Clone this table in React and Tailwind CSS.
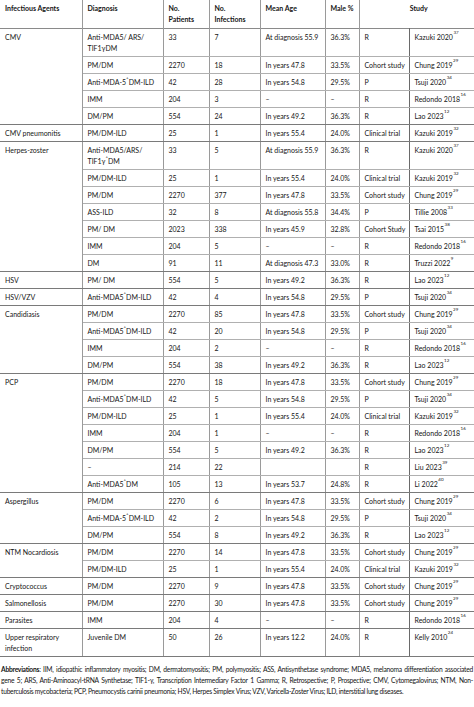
const rows = [
  { agent: 'CMV', items: [
    [['Anti-MDA5/ ARS/', 'TIF1γDM'], '33', '7', 'At diagnosis 55.9', '36.3%', 'R', 'Kazuki 2020', '37'],
    ['PM/DM', '2270', '18', 'In years 47.8', '33.5%', 'Cohort study', 'Chung 2019', '29'],
    ['Anti-MDA-5+DM-ILD', '42', '28', 'In years 54.8', '29.5%', 'P', 'Tsuji 2020', '34'],
    ['IMM', '204', '3', '–', '–', 'R', 'Redondo 2018', '16'],
    ['DM/PM', '554', '24', 'In years 49.2', '36.3%', 'R', 'Lao 2023', '12'],
  ] },
  { agent: 'CMV pneumonitis', items: [
    ['PM/DM-ILD', '25', '1', 'In years 55.4', '24.0%', 'Clinical trial', 'Kazuki 2019', '32'],
  ] },
  { agent: 'Herpes-zoster', items: [
    [['Anti-MDA5/ARS/', 'TIF1γ+DM'], '33', '5', 'At diagnosis 55.9', '36.3%', 'R', 'Kazuki 2020', '37'],
    ['PM/DM-ILD', '25', '1', 'In years 55.4', '24.0%', 'Clinical trial', 'Kazuki 2019', '32'],
    ['PM/DM', '2270', '377', 'In years 47.8', '33.5%', 'Cohort study', 'Chung 2019', '29'],
    ['ASS-ILD', '32', '8', 'At diagnosis 55.8', '34.4%', 'P', 'Tillie 2008', '33'],
    ['PM/ DM', '2023', '338', 'In years 45.9', '32.8%', 'Cohort Study', 'Tsai 2015', '38'],
    ['IMM', '204', '5', '–', '–', 'R', 'Redondo 2018', '16'],
    ['DM', '91', '11', 'At diagnosis 47.3', '33.0%', 'R', 'Truzzi 2022', '9'],
  ] },
  { agent: 'HSV', items: [
    ['PM/ DM', '554', '5', 'In years 49.2', '36.3%', 'R', 'Lao 2023', '12'],
  ] },
  { agent: 'HSV/VZV', items: [
    ['Anti-MDA5+DM-ILD', '42', '4', 'In years 54.8', '29.5%', 'P', 'Tsuji 2020', '34'],
  ] },
  { agent: 'Candidiasis', items: [
    ['PM/DM', '2270', '85', 'In years 47.8', '33.5%', 'Cohort study', 'Chung 2019', '29'],
    ['Anti-MDA5+DM-ILD', '42', '20', 'In years 54.8', '29.5%', 'P', 'Tsuji 2020', '34'],
    ['IMM', '204', '2', '–', '–', 'R', 'Redondo 2018', '16'],
    ['DM/PM', '554', '38', 'In years 49.2', '36.3%', 'R', 'Lao 2023', '12'],
  ] },
  { agent: 'PCP', items: [
    ['PM/DM', '2270', '18', 'In years 47.8', '33.5%', 'Cohort study', 'Chung 2019', '29'],
    ['Anti-MDA5+DM-ILD', '42', '5', 'In years 54.8', '29.5%', 'P', 'Tsuji 2020', '34'],
    ['PM/DM-ILD', '25', '1', 'In years 55.4', '24.0%', 'Clinical trial', 'Kazuki 2019', '32'],
    ['IMM', '204', '1', '–', '–', 'R', 'Redondo 2018', '16'],
    ['DM/PM', '554', '5', 'In years 49.2', '36.3%', 'R', 'Lao 2023', '12'],
    ['–', '214', '22', '', '', 'R', 'Liu 2023', '39'],
    ['Anti-MDA5+DM', '105', '13', 'In years 53.7', '24.8%', 'R', 'Li 2022', '40'],
  ] },
  { agent: 'Aspergillus', items: [
    ['PM/DM', '2270', '6', 'In years 47.8', '33.5%', 'Cohort study', 'Chung 2019', '29'],
    ['Anti-MDA-5+DM-ILD', '42', '2', 'In years 54.8', '29.5%', 'P', 'Tsuji 2020', '34'],
    ['DM/PM', '554', '8', 'In years 49.2', '36.3%', 'R', 'Lao 2023', '12'],
  ] },
  { agent: 'NTM Nocardiosis', items: [
    ['PM/DM', '2270', '14', 'In years 47.8', '33.5%', 'Cohort study', 'Chung 2019', '29'],
    ['PM/DM-ILD', '25', '1', 'In years 55.4', '24.0%', 'Clinical trial', 'Kazuki 2019', '32'],
  ] },
  { agent: 'Cryptococcus', items: [
    ['PM/DM', '2270', '9', 'In years 47.8', '33.5%', 'Cohort study', 'Chung 2019', '29'],
  ] },
  { agent: 'Salmonellosis', items: [
    ['PM/DM', '2270', '30', 'In years 47.8', '33.5%', 'Cohort study', 'Chung 2019', '29'],
  ] },
  { agent: 'Parasites', items: [
    ['IMM', '204', '4', '–', '–', 'R', 'Redondo 2018', '16'],
  ] },
  { agent: ['Upper respiratory', 'infection'], items: [
    ['Juvenile DM', '50', '26', 'In years 12.2', '24.0%', 'R', 'Kelly 2010', '24'],
  ] },
];

// "+" inside a diagnosis is printed as a superscript
function Diagnosis({ text }) {
  const parts = text.split('+');
  if (parts.length === 1) return text;
  return (
    <>
      {parts[0]}
      <sup className="text-[4.5px] align-[3px]">+</sup>
      {parts[1]}
    </>
  );
}

function Lines({ value, render = (v) => v }) {
  if (Array.isArray(value)) {
    return value.map((line, i) => (
      <span key={i} className="block">
        {render(line)}
      </span>
    ));
  }
  return render(value);
}

const cell = 'pl-[5px] pr-[1px] pt-[3px] pb-[2px] align-top text-left font-normal whitespace-nowrap overflow-hidden';

export default function App() {
  return (
    <div className="w-[474px] bg-white text-[#161616] font-['Lato','Liberation_Sans',sans-serif] text-[7px] leading-[11px]">
      <table className="w-[474px] table-fixed border-collapse">
        <colgroup>
          <col className="w-[82px]" />
          <col className="w-[81px]" />
          <col className="w-[46px]" />
          <col className="w-[51px]" />
          <col className="w-[65px]" />
          <col className="w-[34px]" />
          <col className="w-[50px]" />
          <col className="w-[65px]" />
        </colgroup>
        <thead>
          <tr className="h-[28px] border-b border-[#8a8a8a]">
            <th className={`${cell} !font-bold border-r border-[#9a9a9a]`}>Infectious Agents</th>
            <th className={`${cell} !font-bold border-r border-[#9a9a9a]`}>Diagnosis</th>
            <th className={`${cell} !font-bold border-r border-[#9a9a9a]`}>No.<br />Patients</th>
            <th className={`${cell} !font-bold border-r border-[#9a9a9a]`}>No.<br />Infections</th>
            <th className={`${cell} !font-bold border-r border-[#9a9a9a]`}>Mean Age</th>
            <th className={`${cell} !font-bold border-r border-[#9a9a9a]`}>Male %</th>
            <th colSpan={2} className={`${cell} !font-bold !text-center`}>Study</th>
          </tr>
        </thead>
        <tbody>
          {rows.map((group, gi) =>
            group.items.map((item, ii) => {
              const last = ii === group.items.length - 1;
              const line = last ? 'border-b border-[#7a7a7a]' : 'border-b border-[#b0b0b0]';
              const [diag, pts, inf, age, male, type, ref, sup] = item;
              return (
                <tr key={`${gi}-${ii}`}>
                  {ii === 0 ? (
                    <td rowSpan={group.items.length} className={`${cell} border-r border-b border-r-[#9a9a9a] border-b-[#7a7a7a]`}>
                      <Lines value={group.agent} />
                    </td>
                  ) : null}
                  <td className={`${cell} ${line} border-r border-r-[#9a9a9a]`}>
                    <Lines value={diag} render={(v) => <Diagnosis text={v} />} />
                  </td>
                  <td className={`${cell} ${line} border-r border-r-[#9a9a9a]`}>{pts}</td>
                  <td className={`${cell} ${line} border-r border-r-[#9a9a9a]`}>{inf}</td>
                  <td className={`${cell} ${line} border-r border-r-[#9a9a9a]`}>{age}</td>
                  <td className={`${cell} ${line} border-r border-r-[#9a9a9a]`}>{male}</td>
                  <td className={`${cell} ${line} border-r border-r-[#6a6a6a]`}>{type}</td>
                  <td className={`${cell} ${line}`}>
                    {ref}
                    <sup className="text-[4.5px] align-[3px] ml-[0.5px]">{sup}</sup>
                  </td>
                </tr>
              );
            })
          )}
        </tbody>
      </table>
      <div className="px-[1px] pt-[7px] text-[6.7px] leading-[11px] tracking-[-0.25px]">
        <p className="whitespace-nowrap text-justify [text-align-last:justify]">
          <span className="font-bold">Abbreviations</span>: IIM, idiopathic inflammatory myositis; DM, dermatomyositis; PM, polymyositis; ASS, Antisynthetase syndrome; MDA5, melanoma differentiation associated
        </p>
        <p className="whitespace-nowrap text-justify [text-align-last:justify]">
          gene 5; ARS, Anti-Aminoacyl-tRNA Synthetase; TIF1-γ, Transcription Intermediary Factor 1 Gamma; R, Retrospective; P, Prospective; CMV, Cytomegalovirus; NTM, Non-
        </p>
        <p className="whitespace-nowrap">
          tuberculosis mycobacteria; PCP, Pneumocystis carinii pneumonia; HSV, Herpes Simplex Virus; VZV, Varicella-Zoster Virus; ILD, interstitial lung diseases.
        </p>
      </div>
    </div>
  );
}
